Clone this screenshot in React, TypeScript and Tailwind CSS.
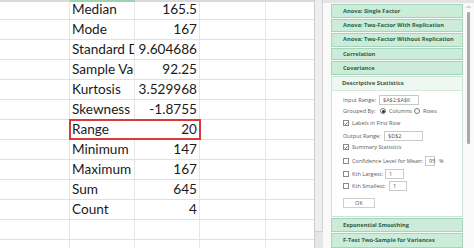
import React from "react";

const rows: [string, string][] = [
  ["Median", "165.5"],
  ["Mode", "167"],
  ["Standard Deviation", "9.604686"],
  ["Sample Variance", "92.25"],
  ["Kurtosis", "3.529968"],
  ["Skewness", "-1.8755"],
  ["Range", "20"],
  ["Minimum", "147"],
  ["Maximum", "167"],
  ["Sum", "645"],
  ["Count", "4"],
  ["", ""],
  ["", ""],
];

function Check({ checked }: { checked?: boolean }) {
  return (
    <span className="w-[6px] h-[6px] border border-[#8a8a8a] bg-white flex items-center justify-center mr-[3px] shrink-0">
      {checked && (
        <svg width="5" height="5" viewBox="0 0 10 10">
          <path d="M1.5 5.2 L4 7.6 L8.6 2.4" stroke="#333" strokeWidth="1.8" fill="none" />
        </svg>
      )}
    </span>
  );
}

function Radio({ on }: { on?: boolean }) {
  return (
    <span className="w-[6px] h-[6px] rounded-full border border-[#7a7a7a] bg-white flex items-center justify-center mr-[3px] shrink-0">
      {on && <span className="w-[3px] h-[3px] rounded-full bg-[#333]" />}
    </span>
  );
}

function Box({ w, text }: { w: string; text: string }) {
  return (
    <span className={`${w} h-[10px] border border-[#c9c9c9] bg-white flex items-center pl-[3px] text-[5.5px] text-[#555] shrink-0`}>
      {text}
    </span>
  );
}

function GreenBtn({ label, h }: { label: string; h: string }) {
  return (
    <div className={`${h} bg-[#cbecd9] border border-[#a6d4ba] flex items-center pl-[11px] text-[5.7px] font-bold text-[#2f5e46] whitespace-nowrap overflow-hidden`}>
      {label}
    </div>
  );
}

export default function App() {
  return (
    <div className="w-[474px] h-[248px] flex overflow-hidden bg-white">
      {/* spreadsheet */}
      <div className="relative w-[314px] flex flex-col font-['Lato',sans-serif] text-[13.6px] text-[#1a1a1a]">
        <div className="absolute top-0 left-0 right-0 h-[2px] flex z-10">
          <div className="w-[70px] bg-[#d9d9d9]" />
          <div className="w-[65px] bg-[#9ed3b0]" />
          <div className="flex-1 bg-[#d9d9d9]" />
        </div>
        {rows.map(([label, value], i) => (
          <div key={i} className="h-[20px] shrink-0 flex border-b border-[#e0e0e0]">
            <div className="w-[70px] shrink-0 border-r border-[#e6e6e6]" />
            {label === "Range" ? (
              <div className="w-[130px] shrink-0 flex outline-2 outline-solid outline-[#d93a3a] -outline-offset-1 z-10">
                <div className="w-[65px] shrink-0 flex items-center pl-[2px] whitespace-nowrap overflow-hidden">
                  {label}
                </div>
                <div className="w-[65px] shrink-0 flex items-center justify-end pr-[3px]">{value}</div>
              </div>
            ) : (
              <>
                <div className="w-[65px] shrink-0 border-r border-[#e6e6e6] flex items-center pl-[2px] whitespace-nowrap overflow-hidden">
                  {label}
                </div>
                <div className="w-[65px] shrink-0 border-r border-[#e6e6e6] flex items-center justify-end pr-[2px]">
                  {value}
                </div>
              </>
            )}
            <div className="w-[66px] shrink-0 border-r border-[#e6e6e6]" />
            <div className="flex-1" />
          </div>
        ))}
      </div>

      {/* separator strip */}
      <div className="w-[9px] shrink-0 bg-[#e6e6e6] border-l border-[#cdcdcd] flex flex-col">
        <div className="h-[232px] bg-[#eeeeee] border-b border-r border-[#d2d2d2]" />
      </div>

      {/* analysis panel */}
      <div className="flex-1 flex flex-col bg-[#f9f9f9] font-['Open_Sans',sans-serif]">
        <div className="h-[3px] bg-[#e4e4e4] shrink-0" />
        <div className="flex flex-1 min-h-0">
          <div className="w-[132px] ml-[8px] mt-[1px] flex flex-col gap-[1px]">
            <GreenBtn label="Anova: Single Factor" h="h-[14px]" />
            <GreenBtn label="Anova: Two-Factor With Replication" h="h-[13px]" />
            <GreenBtn label="Anova: Two-Factor Without Replication" h="h-[14px]" />
            <GreenBtn label="Correlation" h="h-[13px]" />
            <GreenBtn label="Covariance" h="h-[14px]" />
            <div className="border border-[#cfe2d7] bg-white flex flex-col">
              <div className="h-[14px] bg-[#eef7f2] border-b border-[#d7e9de] flex items-center pl-[10px] text-[5.9px] font-bold text-[#3c5d4c]">
                Descriptive Statistics
              </div>
              <div className="flex flex-col pl-[11px] pt-[4px] pb-[8px] text-[5.6px] text-[#5a5a5a] whitespace-nowrap">
                <div className="h-[10px] grid grid-cols-[36px_40px] items-center">
                  <span>Input Range:</span>
                  <Box w="w-[40px]" text="$A$2:$A$6" />
                </div>
                <div className="h-[10px] mt-[1px] grid grid-cols-[37px_9px_25px_9px_auto] items-center">
                  <span>Grouped By:</span>
                  <Radio on />
                  <span>Columns</span>
                  <Radio />
                  <span>Rows</span>
                </div>
                <div className="h-[10px] mt-[2px] flex items-center">
                  <Check checked />
                  Labels in First Row
                </div>
                <div className="h-[10px] mt-[3px] grid grid-cols-[41px_39px] items-center">
                  <span>Output Range:</span>
                  <Box w="w-[39px]" text="$D$2" />
                </div>
                <div className="h-[10px] mt-[1px] flex items-center">
                  <Check checked />
                  Summary Statistics
                </div>
                <div className="h-[10px] mt-[4px] grid grid-cols-[9px_73px_10px_auto] items-center">
                  <Check />
                  <span>Confidence Level for Mean:</span>
                  <Box w="w-[10px]" text="95" />
                  <span className="pl-[4px]">%</span>
                </div>
                <div className="h-[10px] mt-[3px] grid grid-cols-[9px_33px_19px] items-center">
                  <Check />
                  <span>Kth Largest:</span>
                  <Box w="w-[19px]" text="1" />
                </div>
                <div className="h-[10px] mt-[2px] grid grid-cols-[9px_37px_18px] items-center">
                  <Check />
                  <span>Kth Smallest:</span>
                  <Box w="w-[18px]" text="1" />
                </div>
                <div className="h-[10px] mt-[7px] w-[32px] border border-[#cfcfcf] bg-white flex items-center justify-center">
                  OK
                </div>
              </div>
            </div>
            <GreenBtn label="Exponential Smoothing" h="h-[14px]" />
            <GreenBtn label="F-Test Two-Sample for Variances" h="h-[15px]" />
          </div>
          <div className="w-[6px] ml-[2px] flex flex-col items-center pt-[2px]">
            <svg width="5" height="4" viewBox="0 0 10 8">
              <path d="M1 6 L5 2 L9 6" stroke="#888" strokeWidth="1.4" fill="none" />
            </svg>
            <div className="w-[3px] h-[132px] mt-[3px] bg-[#a8a8a8] rounded-[1px]" />
          </div>
        </div>
      </div>
    </div>
  );
}
